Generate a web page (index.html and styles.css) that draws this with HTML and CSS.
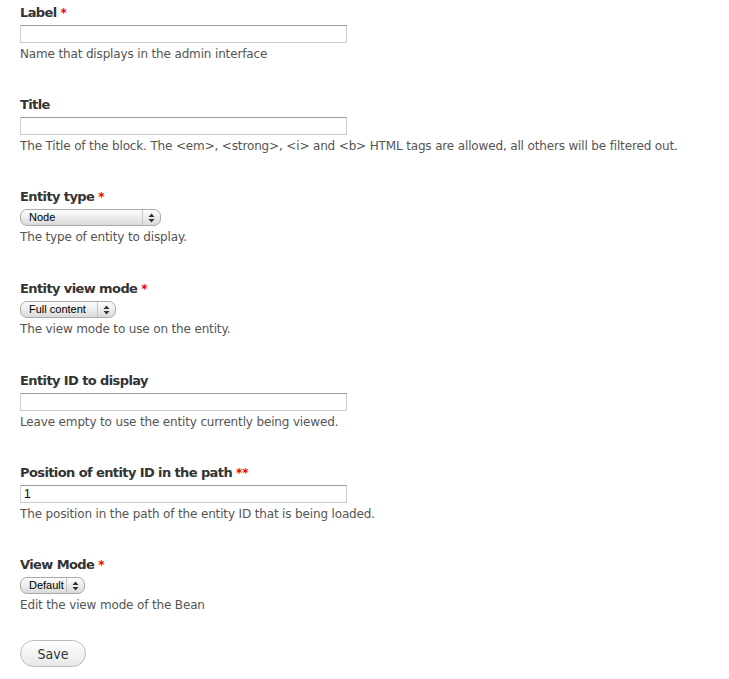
FILE: index.html
```html
<!DOCTYPE html>
<html>
<head>
<meta charset="utf-8">
<link rel="stylesheet" href="styles.css">
</head>
<body>
<form class="form">
  <div class="item">
    <label class="label">Label <span class="req">*</span></label>
    <input class="text" type="text">
    <div class="desc">Name that displays in the admin interface</div>
  </div>
  <div class="item">
    <label class="label">Title</label>
    <input class="text" type="text">
    <div class="desc">The Title of the block. The &lt;em&gt;, &lt;strong&gt;, &lt;i&gt; and &lt;b&gt; HTML tags are allowed, all others will be filtered out.</div>
  </div>
  <div class="item">
    <label class="label">Entity type <span class="req">*</span></label>
    <div class="select w-node"><span class="sel-text">Node</span><span class="sel-arrow"><svg width="7" height="10" viewBox="0 0 7 10"><path d="M3.5 0.5 L6.5 4 H0.5 Z M3.5 9.5 L6.5 6 H0.5 Z" fill="#333"/></svg></span></div>
    <div class="desc">The type of entity to display.</div>
  </div>
  <div class="item">
    <label class="label">Entity view mode <span class="req">*</span></label>
    <div class="select w-full"><span class="sel-text">Full content</span><span class="sel-arrow"><svg width="7" height="10" viewBox="0 0 7 10"><path d="M3.5 0.5 L6.5 4 H0.5 Z M3.5 9.5 L6.5 6 H0.5 Z" fill="#333"/></svg></span></div>
    <div class="desc">The view mode to use on the entity.</div>
  </div>
  <div class="item">
    <label class="label">Entity ID to display</label>
    <input class="text" type="text">
    <div class="desc">Leave empty to use the entity currently being viewed.</div>
  </div>
  <div class="item">
    <label class="label">Position of entity ID in the path <span class="req">**</span></label>
    <input class="text" type="text" value="1">
    <div class="desc">The position in the path of the entity ID that is being loaded.</div>
  </div>
  <div class="item last">
    <label class="label">View Mode <span class="req">*</span></label>
    <div class="select w-default"><span class="sel-text">Default</span><span class="sel-arrow"><svg width="7" height="10" viewBox="0 0 7 10"><path d="M3.5 0.5 L6.5 4 H0.5 Z M3.5 9.5 L6.5 6 H0.5 Z" fill="#333"/></svg></span></div>
    <div class="desc">Edit the view mode of the Bean</div>
  </div>
  <div class="actions">
    <button class="btn" type="button">Save</button>
  </div>
</form>
</body>
</html>
```
FILE: styles.css
```css
html, body {
  margin: 0;
  padding: 0;
  background: #fff;
}
body {
  font-family: "DejaVu Sans", Verdana, sans-serif;
  color: #333;
}
.form {
  padding: 4px 20px 0;
}
.item {
  display: flex;
  flex-direction: column;
  align-items: flex-start;
  height: 92px;
}
.item.last {
  height: 84px;
}
.label {
  font-size: 13px;
  font-weight: bold;
  line-height: 18px;
  letter-spacing: -0.6px;
  color: #333;
  margin-bottom: 3px;
}
.req {
  color: #e00;
  font-size: 12px;
  letter-spacing: 0;
}
.text {
  box-sizing: border-box;
  width: 327px;
  height: 18px;
  margin: 0;
  padding: 0 3px;
  border: 1px solid #ccc;
  border-top-color: #999;
  font-family: "Liberation Sans", Arial, sans-serif;
  font-size: 12px;
  color: #000;
  outline: none;
}
.desc {
  font-size: 12px;
  line-height: 18px;
  letter-spacing: -0.15px;
  color: #555;
  margin-top: 2px;
}
.select {
  box-sizing: border-box;
  display: flex;
  align-items: stretch;
  height: 17px;
  border: 1px solid #aaa;
  border-radius: 7px;
  background: linear-gradient(#fdfdfd, #ececec 50%, #dadada);
  font-family: "Liberation Sans", Arial, sans-serif;
  font-size: 11px;
  color: #000;
}
.sel-text {
  flex: 1;
  padding-left: 8px;
  line-height: 15px;
}
.sel-arrow {
  width: 17px;
  border-left: 1px solid #c4c4c4;
  display: flex;
  align-items: center;
  justify-content: center;
}
.w-node { width: 141px; }
.w-full { width: 96px; }
.w-default { width: 65px; }
.btn {
  box-sizing: border-box;
  width: 66px;
  height: 27px;
  border: 1px solid #bbb;
  border-radius: 14px;
  background: linear-gradient(#fff, #e8e8e8);
  font-family: "DejaVu Sans Condensed", "DejaVu Sans", sans-serif;
  font-size: 14px;
  color: #333;
  padding: 0;
}
```
